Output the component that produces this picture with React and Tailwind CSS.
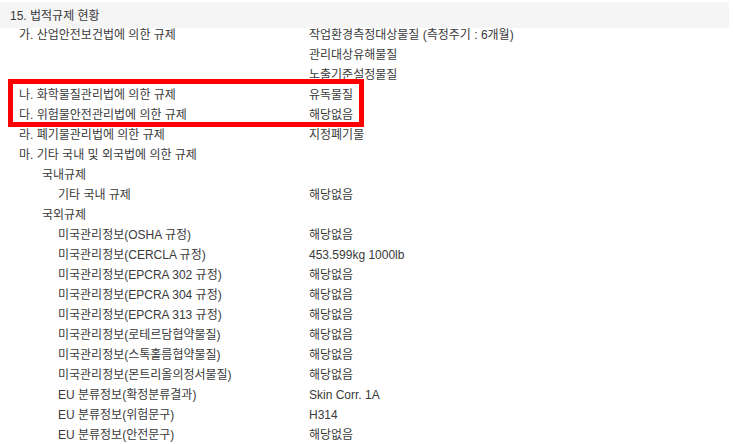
const rows = [
  { label: '가. 산업안전보건법에 의한 규제', value: '작업환경측정대상물질 (측정주기 : 6개월)', level: 0 },
  { label: '', value: '관리대상유해물질', level: 0 },
  { label: '', value: '노출기준설정물질', level: 0 },
  { label: '나. 화학물질관리법에 의한 규제', value: '유독물질', level: 0 },
  { label: '다. 위험물안전관리법에 의한 규제', value: '해당없음', level: 0 },
  { label: '라. 폐기물관리법에 의한 규제', value: '지정폐기물', level: 0 },
  { label: '마. 기타 국내 및 외국법에 의한 규제', value: '', level: 0 },
  { label: '국내규제', value: '', level: 1 },
  { label: '기타 국내 규제', value: '해당없음', level: 2 },
  { label: '국외규제', value: '', level: 1 },
  { label: '미국관리정보(OSHA 규정)', value: '해당없음', level: 2 },
  { label: '미국관리정보(CERCLA 규정)', value: '453.599kg 1000lb', level: 2 },
  { label: '미국관리정보(EPCRA 302 규정)', value: '해당없음', level: 2 },
  { label: '미국관리정보(EPCRA 304 규정)', value: '해당없음', level: 2 },
  { label: '미국관리정보(EPCRA 313 규정)', value: '해당없음', level: 2 },
  { label: '미국관리정보(로테르담협약물질)', value: '해당없음', level: 2 },
  { label: '미국관리정보(스톡홀름협약물질)', value: '해당없음', level: 2 },
  { label: '미국관리정보(몬트리올의정서물질)', value: '해당없음', level: 2 },
  { label: 'EU 분류정보(확정분류결과)', value: 'Skin Corr. 1A', level: 2 },
  { label: 'EU 분류정보(위험문구)', value: 'H314', level: 2 },
  { label: 'EU 분류정보(안전문구)', value: '해당없음', level: 2 },
];

const indent = ['pl-[19px]', 'pl-[42px]', 'pl-[58px]'];

export default function App() {
  return (
    <div className="w-[733px] h-[444px] overflow-hidden bg-white text-[12px] text-[#3a3a3a]" style={{ fontFamily: '"Liberation Sans", "Noto Sans CJK KR", sans-serif' }}>
      <div className="pt-[2px] pr-[4px]">
        <div className="h-[26px] bg-[#f5f5f5] pl-[10px] pt-[1px] flex items-center">15. 법적규제 현황</div>
      </div>
      <div className="relative">
        {rows.map((r, i) => (
          <div key={i} className="h-[20px] flex leading-[14px]">
            <div className={`w-[309px] whitespace-nowrap ${indent[r.level]}`}>{r.label}</div>
            <div className="whitespace-nowrap">{r.value}</div>
          </div>
        ))}
        <div className="absolute left-[8px] top-[51px] w-[356px] h-[48px] border-[5px] border-[#ff0000]" />
      </div>
    </div>
  );
}
